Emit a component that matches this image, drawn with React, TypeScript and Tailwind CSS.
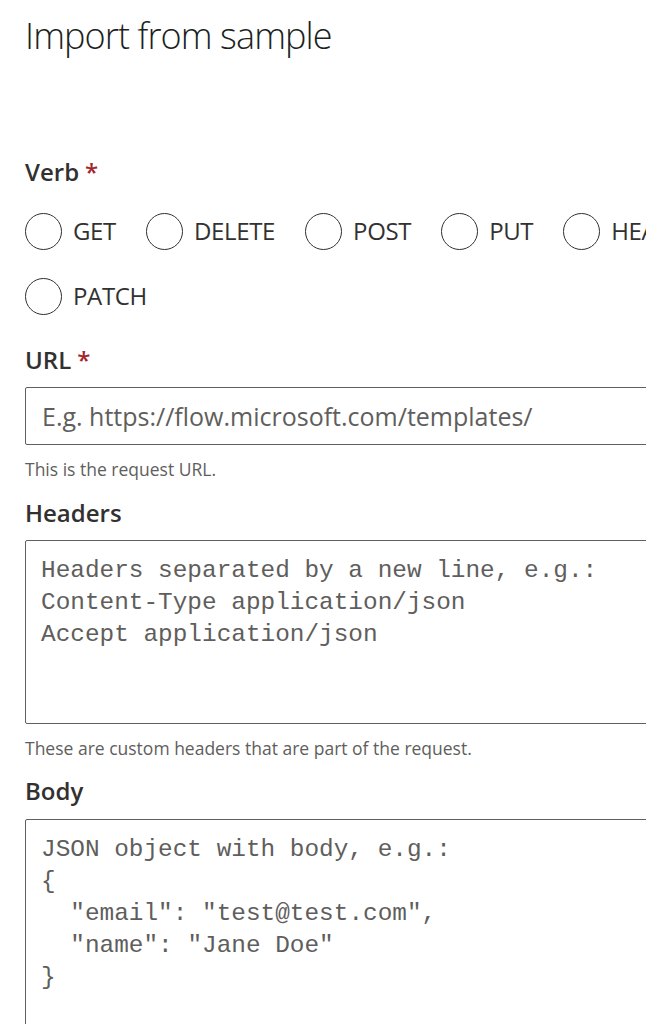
import React from "react";

const verbs = ["GET", "DELETE", "POST", "PUT", "HEAD", "PATCH"];

function Label({ text, required }: { text: string; required?: boolean }) {
  return (
    <div className="text-[24px] leading-[32px] font-semibold text-[#323130]">
      {text}
      {required && <span className="ml-[6px] text-[#a4262c]">*</span>}
    </div>
  );
}

function Radio({ label }: { label: string }) {
  return (
    <label className="flex items-center h-[36px] mr-[30px] cursor-pointer">
      <span className="w-[37px] h-[37px] rounded-full border border-[#323130] bg-white shrink-0" />
      <span className="ml-[11px] text-[24px] leading-[32px] tracking-[-0.35px] text-[#323130] whitespace-nowrap">
        {label}
      </span>
    </label>
  );
}

const mono = { fontFamily: '"Liberation Mono", "DejaVu Sans Mono", monospace' };

export default function App() {
  return (
    <div
      className="w-[646px] min-h-screen overflow-hidden bg-white"
      style={{ fontFamily: '"Open Sans", "Noto Sans", sans-serif' }}
    >
      <div className="w-[720px] pl-[25px] pt-[12px] pb-10">
        <h1 className="text-[36px] leading-[48px] font-light tracking-[-0.9px] text-[#201f1e]">
          Import from sample
        </h1>

        <div className="mt-[96px]">
          <Label text="Verb" required />
        </div>
        <div className="mt-[25px] flex flex-wrap gap-y-[29px]">
          {verbs.map((v) => (
            <Radio key={v} label={v} />
          ))}
        </div>

        <div className="mt-[30px]">
          <Label text="URL" required />
        </div>
        <input
          type="text"
          placeholder="E.g. https://flow.microsoft.com/templates/"
          className="mt-[11px] block w-full h-[58px] px-4 border border-[#605e5c] rounded-[2px] text-[25px] text-[#323130] placeholder:text-[#605e5c] outline-none"
        />
        <div className="mt-[12px] text-[17.5px] leading-[24px] text-[#605e5c]">
          This is the request URL.
        </div>

        <div className="mt-[16px]">
          <Label text="Headers" />
        </div>
        <textarea
          placeholder={
            "Headers separated by a new line, e.g.:\nContent-Type application/json\nAccept application/json"
          }
          className="mt-[11px] block w-full h-[184px] pl-[15px] pr-4 pt-[14px] border border-[#605e5c] rounded-[2px] resize-none text-[24.4px] leading-[32px] text-[#323130] placeholder:text-[#605e5c] outline-none"
          style={mono}
        />
        <div className="mt-[12px] text-[17.5px] leading-[24px] text-[#605e5c]">
          These are custom headers that are part of the request.
        </div>

        <div className="mt-[15px]">
          <Label text="Body" />
        </div>
        <textarea
          placeholder={
            'JSON object with body, e.g.:\n{\n  "email": "test@test.com",\n  "name": "Jane Doe"\n}'
          }
          className="mt-[12px] block w-full h-[240px] pl-[15px] pr-4 pt-[14px] border border-[#605e5c] rounded-[2px] resize-none text-[24.4px] leading-[32px] text-[#323130] placeholder:text-[#605e5c] outline-none"
          style={mono}
        />
      </div>
    </div>
  );
}
